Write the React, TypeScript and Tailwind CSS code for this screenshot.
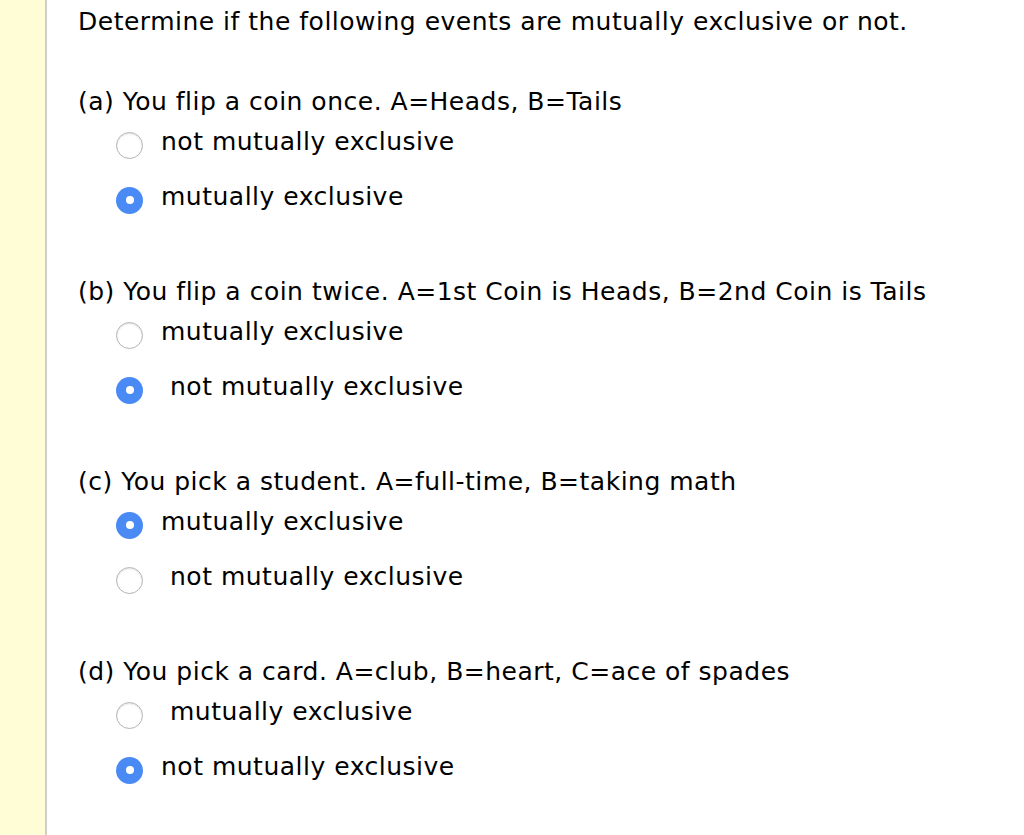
import React from "react"

type Option = { label: string; checked: boolean; indent?: boolean }
type Question = { text: string; options: Option[] }

const questions: Question[] = [
  {
    text: "(a) You flip a coin once. A=Heads, B=Tails",
    options: [
      { label: "not mutually exclusive", checked: false },
      { label: "mutually exclusive", checked: true },
    ],
  },
  {
    text: "(b) You flip a coin twice. A=1st Coin is Heads, B=2nd Coin is Tails",
    options: [
      { label: "mutually exclusive", checked: false },
      { label: "not mutually exclusive", checked: true, indent: true },
    ],
  },
  {
    text: "(c) You pick a student. A=full-time, B=taking math",
    options: [
      { label: "mutually exclusive", checked: true },
      { label: "not mutually exclusive", checked: false, indent: true },
    ],
  },
  {
    text: "(d) You pick a card. A=club, B=heart, C=ace of spades",
    options: [
      { label: "mutually exclusive", checked: false, indent: true },
      { label: "not mutually exclusive", checked: true },
    ],
  },
]

function Radio({ checked }: { checked: boolean }) {
  if (checked) {
    return (
      <span className="mt-[6px] flex h-[27px] w-[27px] shrink-0 items-center justify-center rounded-full bg-[#4a8af4]">
        <span className="block h-[8px] w-[8px] rounded-full bg-white" />
      </span>
    )
  }
  return (
    <span className="mt-[6px] block h-[27px] w-[27px] shrink-0 rounded-full border-[1.5px] border-[#b4b4b4] bg-white shadow-[inset_0_1px_2px_rgba(0,0,0,0.12)]" />
  )
}

function OptionRow({ option, first }: { option: Option; first: boolean }) {
  return (
    <div className={`flex h-[28px] items-center pl-[38px] ${first ? "mt-[12px]" : "mt-[27px]"}`}>
      <Radio checked={option.checked} />
      <span className={`leading-[28px] ${option.indent ? "ml-[27px]" : "ml-[18px]"}`}>{option.label}</span>
    </div>
  )
}

export default function App() {
  return (
    <div className="flex h-[835px] w-[1024px] overflow-hidden bg-white text-[25px] tracking-[0.5px] text-black [font-family:'DejaVu_Sans',Verdana,sans-serif]">
      <div className="w-[47px] shrink-0 border-r-2 border-[#cfcfcf] bg-[#fffdd6]" />
      <div className="flex flex-col pl-[31px] pt-[8px]">
        <p className="whitespace-nowrap leading-[28px]">Determine if the following events are mutually exclusive or not.</p>
        {questions.map((q, i) => (
          <div key={i} className={i === 0 ? "mt-[52px]" : "mt-[67px]"}>
            <p className="whitespace-nowrap leading-[28px]">{q.text}</p>
            {q.options.map((o, j) => (
              <OptionRow key={j} option={o} first={j === 0} />
            ))}
          </div>
        ))}
      </div>
    </div>
  )
}
